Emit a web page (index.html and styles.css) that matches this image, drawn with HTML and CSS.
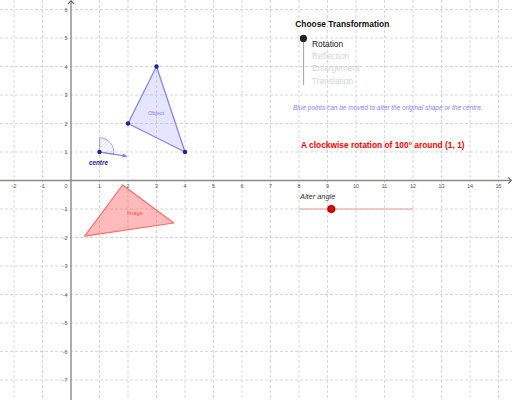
FILE: index.html
```html
<!DOCTYPE html>
<html lang="en">
<head>
<meta charset="utf-8">
<title>Choose Transformation</title>
<link rel="stylesheet" href="styles.css">
</head>
<body>
<div class="applet">
  <svg class="graph" width="512" height="400" viewBox="0 0 512 400" xmlns="http://www.w3.org/2000/svg">
    <defs>
      <pattern id="hatch" width="2.5" height="2.5" patternUnits="userSpaceOnUse" patternTransform="rotate(45)">
        <line x1="0" y1="0" x2="0" y2="2.5" class="hatch-line"/>
      </pattern>
    </defs>
    <path class="grid" d="M14 0V400M42.5 0V400M99.5 0V400M128 0V400M156.5 0V400M185 0V400M213.5 0V400M242 0V400M270.5 0V400M299 0V400M327.5 0V400M356 0V400M384.5 0V400M413 0V400M441.5 0V400M470 0V400M498.5 0V400"/>
    <path class="grid" d="M0 9.5H512M0 38H512M0 66.5H512M0 95H512M0 123.5H512M0 152H512M0 209H512M0 237.5H512M0 266H512M0 294.5H512M0 323H512M0 351.5H512M0 380H512"/>
    <path class="axis" d="M71 0.5V400M0 180.5H511.5"/>
    <path class="axis-arrow" d="M68 4L71 0.8L74 4M508.3 177.5L511.3 180.5L508.3 183.5"/>

    <g class="tick tick-x">
      <text x="14" y="188">-2</text>
      <text x="42.5" y="188">-1</text>
      <text x="99.5" y="188">1</text>
      <text x="128" y="188">2</text>
      <text x="156.5" y="188">3</text>
      <text x="185" y="188">4</text>
      <text x="213.5" y="188">5</text>
      <text x="242" y="188">6</text>
      <text x="270.5" y="188">7</text>
      <text x="299" y="188">8</text>
      <text x="327.5" y="188">9</text>
      <text x="356" y="188">10</text>
      <text x="384.5" y="188">11</text>
      <text x="413" y="188">12</text>
      <text x="441.5" y="188">13</text>
      <text x="470" y="188">14</text>
      <text x="498.5" y="188">15</text>
    </g>
    <g class="tick tick-y">
      <text x="67.5" y="188">0</text>
      <text x="67.5" y="11.5">6</text>
      <text x="67.5" y="40">5</text>
      <text x="67.5" y="68.5">4</text>
      <text x="67.5" y="97">3</text>
      <text x="67.5" y="125.5">2</text>
      <text x="67.5" y="154">1</text>
      <text x="67.5" y="211">-1</text>
      <text x="67.5" y="239.5">-2</text>
      <text x="67.5" y="268">-3</text>
      <text x="67.5" y="296.5">-4</text>
      <text x="67.5" y="325">-5</text>
      <text x="67.5" y="353.5">-6</text>
      <text x="67.5" y="382">-7</text>
    </g>

    <polygon class="object" points="128,123.5 156.5,66.5 185,152"/>
    <polygon class="image" points="122.6,185 173.8,223 84.65,236.2"/>

    <path class="sector" d="M99.5 152V137.75A14.25 14.25 0 0 1 113.53 154.47Z"/>
    <line class="vector" x1="99.5" y1="152" x2="123.5" y2="155.7"/>
    <polygon class="vector-head" points="127.57,156.45 122.3,157.55 123,153.61"/>

    <circle class="pt" cx="128" cy="123.5" r="2.2"/>
    <circle class="pt" cx="156.5" cy="66.5" r="2.2"/>
    <circle class="pt" cx="185" cy="152" r="2.2"/>
    <circle class="pt" cx="99.5" cy="152" r="2.2"/>

    <text class="lbl-object" x="148" y="115">Object</text>
    <text class="lbl-image" x="127" y="215">Image</text>
    <text class="lbl-centre" x="89" y="165">centre</text>

    <line class="chooser-track" x1="303.6" y1="38" x2="303.6" y2="85"/>
    <circle class="chooser-knob" cx="303.4" cy="38.4" r="3.6"/>

    <line class="slider-track" x1="299" y1="209" x2="413.5" y2="209"/>
    <circle class="slider-halo" cx="331.3" cy="209" r="5"/>
    <circle class="slider-knob" cx="331.3" cy="209" r="3.6"/>
  </svg>

  <div class="chooser">
    <div class="chooser-title">Choose Transformation</div>
    <ul class="options">
      <li class="option is-on">Rotation</li>
      <li class="option">Reflection</li>
      <li class="option">Enlargement</li>
      <li class="option">Translation</li>
    </ul>
  </div>
  <p class="hint">Blue points can be moved to alter the original shape or the centre.</p>
  <p class="result">A clockwise rotation of 100° around (1, 1)</p>
  <p class="slider-caption">Alter angle</p>
</div>
</body>
</html>
```
FILE: styles.css
```css
html, body {
  margin: 0;
  padding: 0;
  background: #ffffff;
}

body {
  font-family: "Liberation Sans", Arial, sans-serif;
  width: 512px;
  height: 400px;
  overflow: hidden;
}

.applet {
  position: relative;
  width: 512px;
  height: 400px;
  overflow: hidden;
}

.graph {
  display: block;
}

.grid {
  fill: none;
  stroke: #d2d2d2;
  stroke-width: 0.9;
  stroke-dasharray: 3 2;
}

.axis {
  fill: none;
  stroke: #8a8a8a;
  stroke-width: 1.4;
}

.axis-arrow {
  fill: none;
  stroke: #6a6a6a;
  stroke-width: 1.1;
}

.tick text {
  font-family: "Liberation Sans", Arial, sans-serif;
  font-size: 5.4px;
  fill: #555555;
}

.tick-x text {
  text-anchor: middle;
}

.tick-y text {
  text-anchor: end;
}

.object {
  fill: rgba(153, 153, 255, 0.25);
  stroke: #8585f0;
  stroke-width: 1.3;
  stroke-linejoin: round;
}

.image {
  fill: rgba(255, 60, 60, 0.35);
  stroke: #ff6b6b;
  stroke-width: 1.2;
  stroke-linejoin: round;
}

.hatch-line {
  stroke: #a9a9f2;
  stroke-width: 0.7;
}

.sector {
  fill: url(#hatch);
  stroke: #9a9af5;
  stroke-width: 0.9;
}

.vector {
  stroke: #8080f0;
  stroke-width: 1.2;
}

.vector-head {
  fill: #8080f0;
}

.pt {
  fill: #20209a;
}

.lbl-object {
  font-size: 5.6px;
  fill: #7f7fff;
}

.lbl-image {
  font-size: 5.7px;
  fill: #ff4d4d;
}

.lbl-centre {
  font-size: 6.3px;
  font-weight: bold;
  font-style: italic;
  fill: #1a1a9a;
}

.chooser-track {
  stroke: #a0a0a0;
  stroke-width: 1;
}

.chooser-knob {
  fill: #222222;
}

.slider-track {
  stroke: #f3b9b9;
  stroke-width: 1.4;
}

.slider-halo {
  fill: rgba(255, 0, 0, 0.15);
}

.slider-knob {
  fill: #ee0000;
  stroke: #5a0000;
  stroke-width: 0.8;
}

/* GeoGebra text objects floating on the graphics view */
.chooser {
  position: absolute;
  left: 295.3px;
  top: 19.9px;
}

.chooser-title {
  font-size: 8.4px;
  line-height: 8.4px;
  font-weight: bold;
  color: #111111;
  white-space: nowrap;
}

.options {
  list-style: none;
  margin: 9.3px 0 0 0;
  padding: 0 0 0 16.7px;
  display: flex;
  flex-direction: column;
}

.option {
  font-size: 8.4px;
  line-height: 12.4px;
  color: #d4d4d4;
  white-space: nowrap;
}

.option.is-on {
  color: #1a1a1a;
}

.hint {
  position: absolute;
  left: 293px;
  top: 105px;
  margin: 0;
  font-size: 6.5px;
  line-height: 6.5px;
  font-style: italic;
  color: #8484ff;
  white-space: nowrap;
}

.result {
  position: absolute;
  left: 301px;
  top: 141.4px;
  margin: 0;
  font-size: 8.4px;
  line-height: 8.4px;
  font-weight: bold;
  color: #ff0000;
  white-space: nowrap;
}

.slider-caption {
  position: absolute;
  left: 300px;
  top: 193px;
  margin: 0;
  font-size: 7.4px;
  line-height: 7.4px;
  font-style: italic;
  color: #333333;
  white-space: nowrap;
}
```
